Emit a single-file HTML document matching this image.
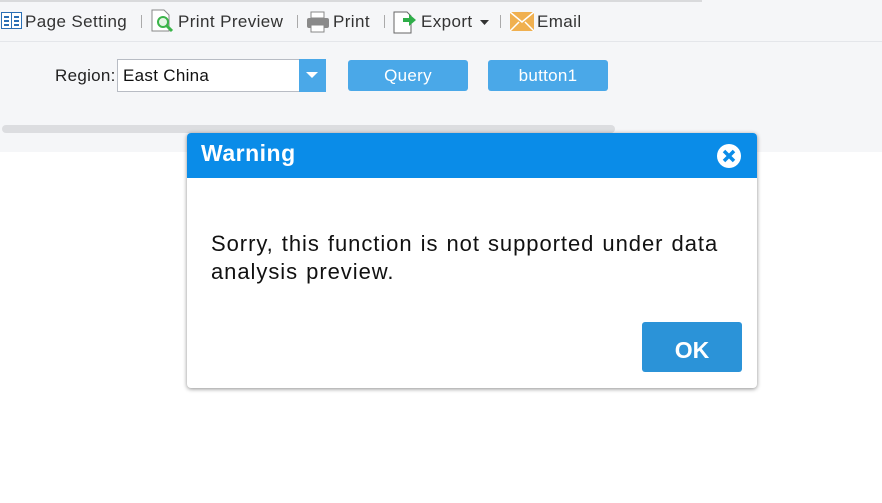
<!DOCTYPE html>
<html><head><style>
body{margin:0;width:882px;height:503px;background:#fff;font-family:"Liberation Sans",Arial,sans-serif;position:relative;overflow:hidden}
.top{position:absolute;left:0;top:0;width:882px;height:152px;background:#f5f6f8}
.topline{position:absolute;left:0;top:0;width:702px;height:2px;background:#d9dadc}
.tb{position:absolute;top:12px;font-size:17px;color:#333;white-space:nowrap;letter-spacing:0.4px}
.sep{position:absolute;top:15px;width:1px;height:13px;background:#aaa}
.tbline{position:absolute;left:0;top:41px;width:882px;height:1px;background:#e4e6ea}
.btn{position:absolute;top:60px;height:31px;background:#4aa8e8;color:#fff;border-radius:3px;font-size:17px;text-align:center;line-height:31px;letter-spacing:0.3px}
</style></head><body>
<div class="top"></div>
<div class="topline"></div>
<div class="tbline"></div>
<svg style="position:absolute;left:1px;top:12px" width="21" height="17"><rect x="0.5" y="0.5" width="20" height="16" fill="#fff" stroke="#2a6fb5"/><line x1="10.5" y1="1" x2="10.5" y2="16" stroke="#2a6fb5"/><g stroke="#2a6fb5" stroke-width="2"><line x1="3" y1="5" x2="8" y2="5"/><line x1="3" y1="9" x2="8" y2="9"/><line x1="3" y1="13" x2="8" y2="13"/><line x1="13" y1="5" x2="18" y2="5"/><line x1="13" y1="9" x2="18" y2="9"/><line x1="13" y1="13" x2="18" y2="13"/></g></svg>
<div class="tb" style="left:25px">Page Setting</div>
<div class="sep" style="left:141px"></div>
<svg style="position:absolute;left:150px;top:8px" width="26" height="26"><path d="M2 2h12l5 5v16H2z" fill="#fff" stroke="#888"/><circle cx="13" cy="14" r="5" fill="#e6f5e6" stroke="#3bb54a" stroke-width="2"/><line x1="17" y1="18" x2="22" y2="23" stroke="#3bb54a" stroke-width="3"/></svg>
<div class="tb" style="left:178px">Print Preview</div>
<div class="sep" style="left:297px"></div>
<svg style="position:absolute;left:306px;top:11px" width="24" height="22"><rect x="5" y="1" width="13" height="6" fill="#fff" stroke="#888"/><rect x="1" y="7" width="22" height="10" rx="2" fill="#8a8a8a"/><rect x="5" y="14" width="13" height="7" fill="#fff" stroke="#888"/></svg>
<div class="tb" style="left:333px">Print</div>
<div class="sep" style="left:384px"></div>
<svg style="position:absolute;left:392px;top:9px" width="26" height="26"><path d="M2 3h13l4 4v17H2z" fill="#fff" stroke="#666"/><path d="M11 9h6V5l7 6-7 6v-4h-6z" fill="#2fae49"/></svg>
<div class="tb" style="left:421px">Export</div>
<svg style="position:absolute;left:480px;top:20px" width="9" height="5"><path d="M0 0h9L4.5 5z" fill="#333"/></svg>
<div class="sep" style="left:500px"></div>
<svg style="position:absolute;left:510px;top:12px" width="24" height="19"><rect width="24" height="19" fill="#f0b050"/><path d="M0 0l12 10L24 0M0 19l9-9M24 19l-9-9" stroke="#fff" stroke-width="1.5" fill="none"/></svg>
<div class="tb" style="left:537px">Email</div>

<div style="position:absolute;left:55px;top:66px;font-size:17px;color:#222;letter-spacing:0.3px">Region:</div>
<div style="position:absolute;left:117px;top:59px;width:209px;height:33px;border:1px solid #b8bcc4;background:#fff;box-sizing:border-box"></div>
<div style="position:absolute;left:123px;top:66px;font-size:17px;color:#111;letter-spacing:0.3px">East China</div>
<div style="position:absolute;left:299px;top:59px;width:27px;height:33px;background:#4aa8e8"></div>
<svg style="position:absolute;left:306px;top:72px" width="12" height="6"><path d="M0 0h12L6 6z" fill="#fff"/></svg>
<div class="btn" style="left:348px;width:120px">Query</div>
<div class="btn" style="left:488px;width:120px">button1</div>

<div style="position:absolute;left:2px;top:125px;width:613px;height:8px;border-radius:4px;background:#dcdde0"></div>

<div style="position:absolute;left:187px;top:133px;width:570px;height:255px;background:#fff;border-radius:4px;box-shadow:0 1px 4px rgba(0,0,0,.45);overflow:hidden">
<div style="height:45px;background:#0a8ce8;color:#fff;font-weight:bold;font-size:23px;line-height:40px;padding-left:14px;letter-spacing:0.5px">Warning</div>
<svg style="position:absolute;left:529px;top:10px" width="26" height="26"><circle cx="13" cy="13" r="12" fill="#fff"/><path d="M8 8l10 10M18 8L8 18" stroke="#0a8ce8" stroke-width="3.5"/></svg>
<div style="position:absolute;left:24px;top:97px;width:545px;font-size:22px;line-height:28px;color:#111;letter-spacing:0.95px;word-spacing:1px;white-space:nowrap">Sorry, this function is not supported under data<br>analysis preview.</div>
<div style="position:absolute;left:455px;top:189px;width:100px;height:50px;background:#2b93d8;border-radius:3px;color:#fff;font-weight:bold;font-size:23px;text-align:center;line-height:56px">OK</div>
</div>
</body></html>
